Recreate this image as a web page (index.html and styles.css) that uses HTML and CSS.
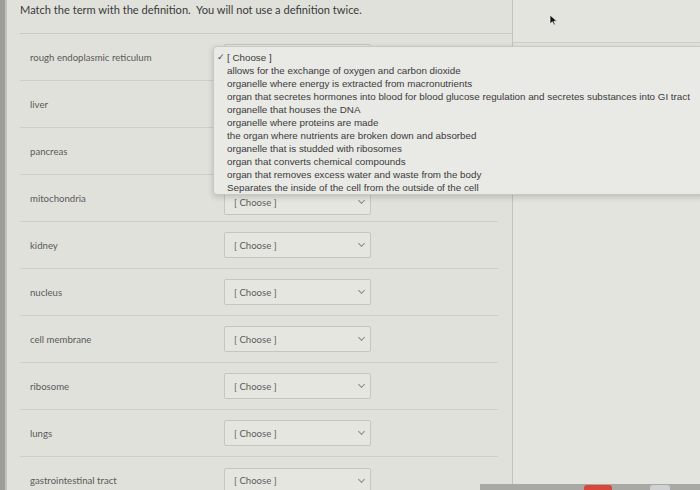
FILE: index.html
```html
<!DOCTYPE html>
<html>
<head>
<meta charset="utf-8">
<link rel="stylesheet" href="styles.css">
</head>
<body>
<div class="screen">
  <div class="edge"></div>
  <div class="page">
    <main class="quiz">
      <h1 class="title">Match the term with the definition.&nbsp; You will not use a definition twice.</h1>
      <div class="rows">
        <div class="row"><span class="term">rough endoplasmic reticulum</span><div class="select under"><span>[ Choose ]</span><i class="chev"></i></div></div>
        <div class="row"><span class="term">liver</span><div class="select under"><span>[ Choose ]</span><i class="chev"></i></div></div>
        <div class="row"><span class="term">pancreas</span><div class="select under"><span>[ Choose ]</span><i class="chev"></i></div></div>
        <div class="row"><span class="term">mitochondria</span><div class="select low"><span>[ Choose ]</span><i class="chev"></i></div></div>
        <div class="row"><span class="term">kidney</span><div class="select"><span>[ Choose ]</span><i class="chev"></i></div></div>
        <div class="row"><span class="term">nucleus</span><div class="select"><span>[ Choose ]</span><i class="chev"></i></div></div>
        <div class="row"><span class="term">cell membrane</span><div class="select"><span>[ Choose ]</span><i class="chev"></i></div></div>
        <div class="row"><span class="term">ribosome</span><div class="select"><span>[ Choose ]</span><i class="chev"></i></div></div>
        <div class="row"><span class="term">lungs</span><div class="select"><span>[ Choose ]</span><i class="chev"></i></div></div>
        <div class="row"><span class="term">gastrointestinal tract</span><div class="select"><span>[ Choose ]</span><i class="chev"></i></div></div>
      </div>
    </main>
    <aside class="side"><div class="side-head"></div></aside>
  </div>

  <ul class="menu">
    <li class="checked"><span class="tick">✓</span>[ Choose ]</li>
    <li>allows for the exchange of oxygen and carbon dioxide</li>
    <li>organelle where energy is extracted from macronutrients</li>
    <li>organ that secretes hormones into blood for blood glucose regulation and secretes substances into GI tract</li>
    <li>organelle that houses the DNA</li>
    <li>organelle where proteins are made</li>
    <li>the organ where nutrients are broken down and absorbed</li>
    <li>organelle that is studded with ribosomes</li>
    <li>organ that converts chemical compounds</li>
    <li>organ that removes excess water and waste from the body</li>
    <li>Separates the inside of the cell from the outside of the cell</li>
  </ul>

  <svg class="cursor" width="9" height="12" viewBox="0 0 9 12"><path d="M1 1 L1 10 L3.4 7.8 L5 11 L6.4 10.4 L4.9 7.2 L8 7.2 Z" fill="#111" stroke="#eee" stroke-width="0.8"/></svg>

  <div class="dock"><span class="dock-red"></span><span class="dock-icon"></span></div>
</div>
</body>
</html>
```
FILE: styles.css
```css
html, body {
  margin: 0;
  padding: 0;
  width: 700px;
  height: 490px;
  overflow: hidden;
  background: #dcdcd7;
}
.screen {
  position: relative;
  width: 700px;
  height: 490px;
  display: flex;
  font-family: Lato, "Liberation Sans", sans-serif;
}
.edge {
  width: 5px;
  flex: none;
  background: #9d9d99;
  border-right: 2px solid #c4c4bf;
}
.page {
  flex: 1;
  display: flex;
  background: #e1e1dc;
}
.quiz {
  width: 506px;
  flex: none;
  border-right: 1px solid #c3c3be;
  padding-left: 13px;
  box-sizing: border-box;
}
.title {
  margin: 0;
  height: 34px;
  box-sizing: border-box;
  padding-top: 3px;
  font-size: 11.1px;
  font-weight: 400;
  color: #3a3a3a;
  border-bottom: 1px solid #cbcbc6;
}
.rows {
  display: flex;
  flex-direction: column;
  padding-right: 14px;
}
.row {
  height: 47px;
  display: flex;
  align-items: center;
  padding-left: 10px;
  border-bottom: 1px solid #cfcfca;
  box-sizing: border-box;
}
.row:last-child { border-bottom: none; }
.term {
  width: 194px;
  flex: none;
  font-size: 9.6px;
  color: #5a5a58;
}
.select {
  width: 147px;
  height: 26px;
  box-sizing: border-box;
  border: 1px solid #c6c6c1;
  border-radius: 2px;
  background: #e6e6e1;
  display: flex;
  align-items: center;
  justify-content: space-between;
  padding: 0 6px 0 9px;
  font-size: 9.6px;
  color: #5c5c5a;
}
.select.under span { visibility: hidden; }
.select.low { margin-top: 8px; }
.chev {
  width: 4px;
  height: 4px;
  border-right: 1px solid #8a8a88;
  border-bottom: 1px solid #8a8a88;
  transform: rotate(45deg);
  margin-top: -3px;
}
.side {
  flex: 1;
  background: #e4e4df;
}
.side-head {
  height: 42px;
  border-bottom: 1px solid #cdcdc8;
}
.menu {
  position: absolute;
  left: 213px;
  top: 46px;
  width: 492px;
  height: 149px;
  box-sizing: border-box;
  margin: 0;
  padding: 4px 0 0 13px;
  list-style: none;
  background: #e9e9e5;
  border: 1px solid #c9c9c4;
  border-radius: 4px;
  box-shadow: 0 2px 6px rgba(0,0,0,0.18);
  font-family: "Liberation Sans", Arial, sans-serif;
  font-size: 9.8px;
  line-height: 13px;
  color: #3b3b3b;
  white-space: nowrap;
  overflow: hidden;
}
.menu li { position: relative; }
.tick {
  position: absolute;
  left: -10px;
  top: 0;
  font-size: 8.5px;
  color: #444;
}
.cursor {
  position: absolute;
  left: 549px;
  top: 14px;
}
.dock {
  position: absolute;
  left: 480px;
  top: 484px;
  width: 220px;
  height: 6px;
  background: #a8a8a4;
}
.dock-red {
  position: absolute;
  left: 104px;
  top: 1px;
  width: 28px;
  height: 5px;
  border-radius: 3px 3px 0 0;
  background: #d9463c;
}
.dock-icon {
  position: absolute;
  left: 170px;
  top: 1px;
  width: 20px;
  height: 5px;
  background: #cfd2d0;
  border-radius: 3px 3px 0 0;
}
```
